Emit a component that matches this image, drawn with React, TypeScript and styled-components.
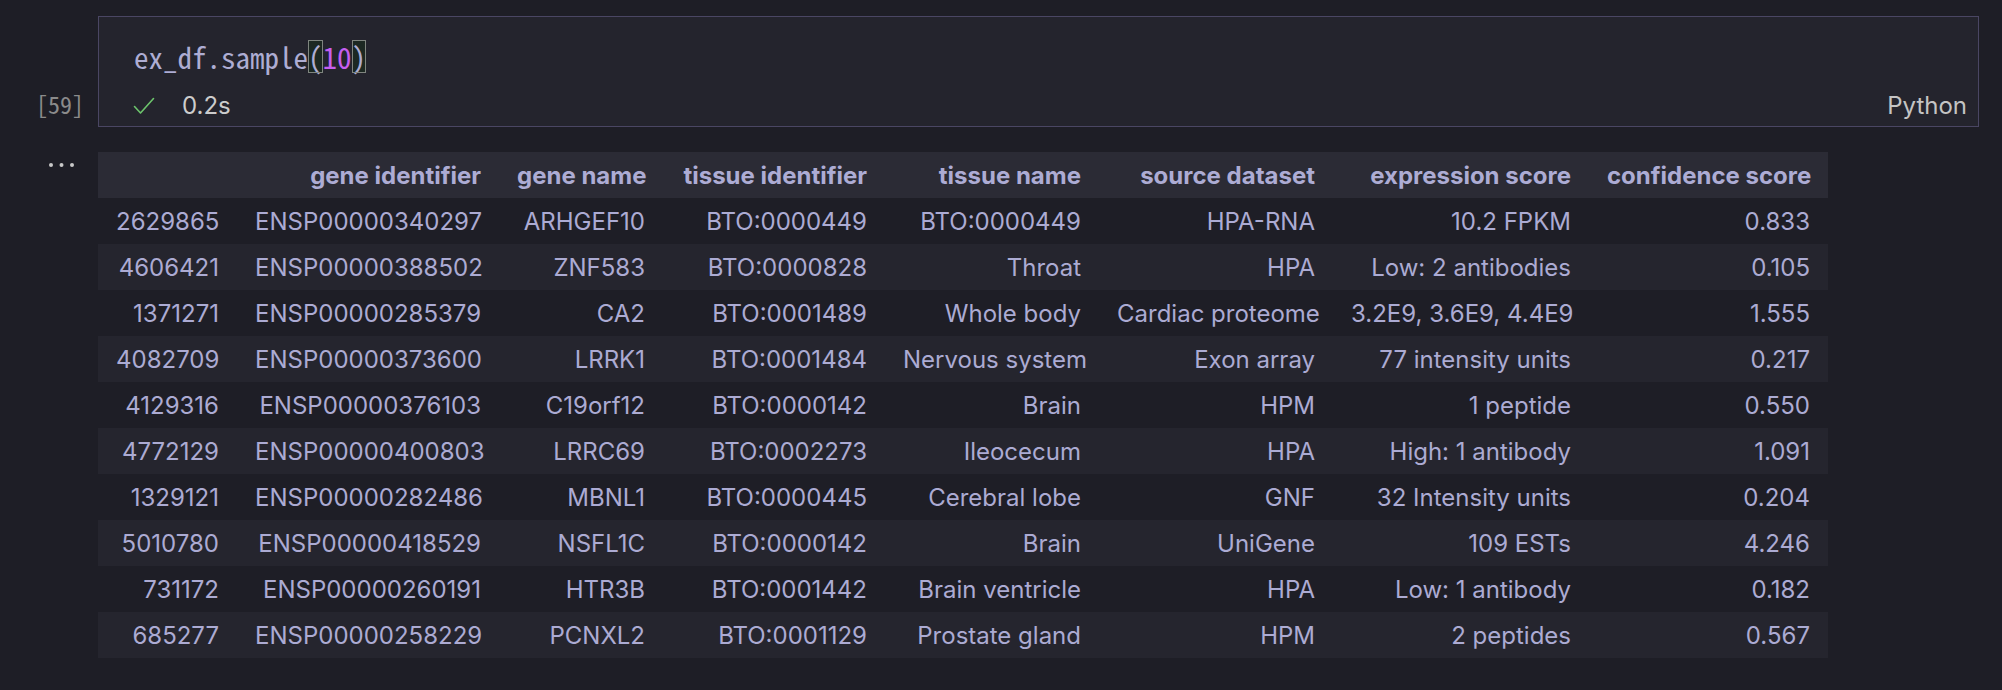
import React from "react";
import styled, { createGlobalStyle } from "styled-components";

const GlobalStyle = createGlobalStyle`
  html, body {
    margin: 0;
    padding: 0;
    background: #1e1e26;
  }
  body {
    font-family: Inter, "Noto Sans", sans-serif;
    color: #acabd3;
  }
`;

const MONO = `"Noto Sans Mono CJK SC", "DejaVu Sans Mono", monospace`;

const Page = styled.div`
  padding-top: 16px;
  width: 2002px;
`;

const CellRow = styled.div`
  display: flex;
  align-items: stretch;
`;

const Gutter = styled.div`
  width: 98px;
  flex: none;
  box-sizing: border-box;
  padding-right: 14px;
  display: flex;
  flex-direction: column;
  align-items: flex-end;
  justify-content: flex-end;
  padding-bottom: 9px;
`;

const ExecCount = styled.span`
  font-family: ${MONO};
  font-size: 24px;
  line-height: 28px;
  color: #8b8b8b;
`;

const CellBox = styled.div`
  width: 1881px;
  flex: none;
  box-sizing: border-box;
  border: 1px solid #4a4663;
  background: #24242d;
  padding: 23px 11px 6px 35px;
  display: flex;
  flex-direction: column;
`;

const CodeLine = styled.div`
  font-family: ${MONO};
  font-size: 29px;
  line-height: 33px;
  height: 33px;
  color: #aeadd3;
  white-space: pre;
`;

const Num = styled.span`
  color: #c65ff0;
`;

const Bracket = styled.span`
  display: inline-block;
  height: 33px;
  line-height: 33px;
  vertical-align: top;
  background: #1c2822;
  outline: 1px solid #7f857f;
  outline-offset: -1px;
`;

const StatusRow = styled.div`
  margin-top: 19px;
  height: 28px;
  display: flex;
  align-items: center;
`;

const Check = styled.svg`
  width: 22px;
  height: 18px;
  margin-left: -1px;
  flex: none;
`;

const Duration = styled.span`
  margin-left: 27px;
  font-size: 24px;
  line-height: 28px;
  color: #cccccc;
`;

const Lang = styled.span`
  margin-left: auto;
  font-size: 24px;
  line-height: 28px;
  color: #c4c4c4;
`;

const OutputRow = styled.div`
  display: flex;
  margin-top: 25px;
`;

const OutGutter = styled.div`
  width: 98px;
  flex: none;
  display: flex;
  justify-content: flex-start;
  padding-top: 10px;
  box-sizing: border-box;
  padding-left: 48px;
`;

const Dots = styled.svg`
  width: 28px;
  height: 6px;
`;

const Table = styled.table`
  border-collapse: collapse;
  border-spacing: 0;
  table-layout: fixed;
  width: 1730px;
  font-family: Inter, "Noto Sans", sans-serif;
  font-size: 24px;
  color: #acabd3;
`;

const HeadRow = styled.tr`
  background: #2b2b35;
`;

const BodyRow = styled.tr<{ $alt: boolean }>`
  background: ${(p) => (p.$alt ? "#25252e" : "transparent")};
`;

const Th = styled.th`
  height: 46px;
  padding: 0 18px;
  text-align: right;
  font-weight: 700;
  white-space: nowrap;
  color: #adacd4;
`;

const Td = styled.td`
  height: 46px;
  padding: 0 18px;
  text-align: right;
  font-weight: 400;
  white-space: nowrap;
`;

const widths = [139, 262, 164, 222, 214, 234, 256, 239];
const headers = [
  "",
  "gene identifier",
  "gene name",
  "tissue identifier",
  "tissue name",
  "source dataset",
  "expression score",
  "confidence score",
];

const rows: string[][] = [
  ["2629865", "ENSP00000340297", "ARHGEF10", "BTO:0000449", "BTO:0000449", "HPA-RNA", "10.2 FPKM", "0.833"],
  ["4606421", "ENSP00000388502", "ZNF583", "BTO:0000828", "Throat", "HPA", "Low: 2 antibodies", "0.105"],
  ["1371271", "ENSP00000285379", "CA2", "BTO:0001489", "Whole body", "Cardiac proteome", "3.2E9, 3.6E9, 4.4E9", "1.555"],
  ["4082709", "ENSP00000373600", "LRRK1", "BTO:0001484", "Nervous system", "Exon array", "77 intensity units", "0.217"],
  ["4129316", "ENSP00000376103", "C19orf12", "BTO:0000142", "Brain", "HPM", "1 peptide", "0.550"],
  ["4772129", "ENSP00000400803", "LRRC69", "BTO:0002273", "Ileocecum", "HPA", "High: 1 antibody", "1.091"],
  ["1329121", "ENSP00000282486", "MBNL1", "BTO:0000445", "Cerebral lobe", "GNF", "32 Intensity units", "0.204"],
  ["5010780", "ENSP00000418529", "NSFL1C", "BTO:0000142", "Brain", "UniGene", "109 ESTs", "4.246"],
  ["731172", "ENSP00000260191", "HTR3B", "BTO:0001442", "Brain ventricle", "HPA", "Low: 1 antibody", "0.182"],
  ["685277", "ENSP00000258229", "PCNXL2", "BTO:0001129", "Prostate gland", "HPM", "2 peptides", "0.567"],
];

export default function App() {
  return (
    <>
      <GlobalStyle />
      <Page>
        <CellRow>
          <Gutter>
            <ExecCount>[59]</ExecCount>
          </Gutter>
          <CellBox>
            <CodeLine>
              ex_df.sample<Bracket>(</Bracket>
              <Num>10</Num>
              <Bracket>)</Bracket>
            </CodeLine>
            <StatusRow>
              <Check viewBox="0 0 22 18" fill="none">
                <path d="M1.5 9.5 L7.5 16 L20.5 1.5" stroke="#6cc46c" strokeWidth="1.6" strokeLinecap="round" strokeLinejoin="round" />
              </Check>
              <Duration>0.2s</Duration>
              <Lang>Python</Lang>
            </StatusRow>
          </CellBox>
        </CellRow>
        <OutputRow>
          <OutGutter>
            <Dots viewBox="0 0 28 6">
              <circle cx="3" cy="3" r="2" fill="#c8c8c8" />
              <circle cx="13.5" cy="3" r="2" fill="#c8c8c8" />
              <circle cx="24" cy="3" r="2" fill="#c8c8c8" />
            </Dots>
          </OutGutter>
          <Table>
            <colgroup>
              {widths.map((w, i) => (
                <col key={i} style={{ width: w }} />
              ))}
            </colgroup>
            <thead>
              <HeadRow>
                {headers.map((h, i) => (
                  <Th key={i}>{h}</Th>
                ))}
              </HeadRow>
            </thead>
            <tbody>
              {rows.map((r, ri) => (
                <BodyRow key={ri} $alt={ri % 2 === 1}>
                  {r.map((c, ci) => (
                    <Td key={ci}>{c}</Td>
                  ))}
                </BodyRow>
              ))}
            </tbody>
          </Table>
        </OutputRow>
      </Page>
    </>
  );
}
